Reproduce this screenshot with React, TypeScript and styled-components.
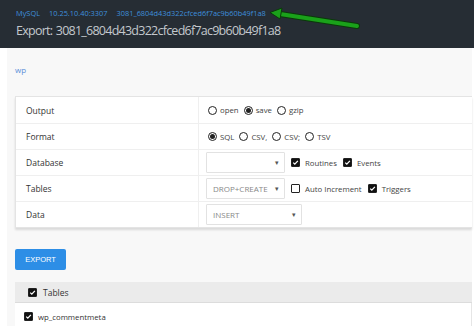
import React from 'react';
import styled, { createGlobalStyle } from 'styled-components';

const GlobalStyle = createGlobalStyle`
  html, body { margin: 0; padding: 0; background: #fff; }
  body { font-family: "Open Sans", "Noto Sans", sans-serif; color: #333; }
  * { box-sizing: border-box; }
`;

const Page = styled.div`
  width: 474px;
  height: 326px;
  overflow: hidden;
  display: flex;
  flex-direction: column;
  position: relative;
`;

const Header = styled.header`
  height: 48px;
  background: #262d34;
  padding: 8px 0 0 16px;
  display: flex;
  flex-direction: column;
  gap: 4px;
`;

const Crumbs = styled.div`
  display: flex;
  gap: 9px;
  font-size: 7.4px;
  line-height: 10px;
  color: #3e8fdc;
`;

const Title = styled.h1`
  margin: 0;
  font-size: 12.5px;
  font-weight: 400;
  line-height: 17px;
  color: #c3c8cd;
  letter-spacing: -0.75px;
  word-spacing: 1px;
`;

const Body = styled.div`
  flex: 1;
  display: flex;
`;

const Content = styled.main`
  flex: 1;
  margin: 0 2px 0 7px;
  background: #f8f8f8;
  padding: 0 0 0 8px;
  display: flex;
  flex-direction: column;
`;

const DbLink = styled.a`
  font-size: 8px;
  color: #5a8fd8;
  margin-top: 17px;
  line-height: 10px;
`;

const Card = styled.div`
  margin-top: 21px;
  background: #fff;
  border: 1px solid #e4e4e4;
  border-right: none;
  box-shadow: 0 2px 2px rgba(0, 0, 0, 0.12);
`;

const Row = styled.div`
  display: grid;
  grid-template-columns: 183px 1fr;
  height: 26px;
  border-top: 1px solid #efefef;
  &:first-child { border-top: none; }
`;

const Label = styled.div`
  display: flex;
  align-items: center;
  padding-left: 10px;
  font-size: 8.5px;
  color: #333;
  border-right: 1px solid #efefef;
`;

const Value = styled.div`
  display: flex;
  align-items: center;
  padding-left: 7px;
  gap: 3px;
  font-size: 7.8px;
  color: #444;
`;

const Radio = styled.span<{ $on?: boolean }>`
  width: 9px;
  height: 9px;
  border-radius: 50%;
  border: 1px solid #222;
  display: inline-flex;
  align-items: center;
  justify-content: center;
  margin-left: 2px;
  &::after {
    content: '';
    width: 5px;
    height: 5px;
    border-radius: 50%;
    background: ${p => (p.$on ? '#222' : 'transparent')};
  }
`;

const Box = styled.span<{ $on?: boolean }>`
  width: 9px;
  height: 9px;
  border: 1px solid #222;
  border-radius: 1px;
  background: ${p => (p.$on ? '#111' : '#fff')};
  display: inline-flex;
  align-items: center;
  justify-content: center;
  margin-left: 3px;
  margin-right: 2px;
`;

const Select = styled.div<{ $w: number }>`
  width: ${p => p.$w}px;
  height: 21px;
  border: 1px solid #e2e2e2;
  border-radius: 1px;
  background: #fff;
  display: flex;
  align-items: center;
  padding: 0 5px 0 6px;
  font-size: 8px;
  color: #888;
  &::after {
    content: '▾';
    margin-left: auto;
    font-size: 7px;
    color: #555;
  }
`;

const ExportButton = styled.button`
  margin-top: 21px;
  width: 51px;
  height: 21px;
  border: none;
  border-radius: 2px;
  background: #2d8ee6;
  color: #fff;
  font-family: "Liberation Sans", Arial, sans-serif;
  font-size: 7.5px;
  padding: 0;
`;

const TablesPanel = styled.div`
  margin-top: 12px;
  flex: 1;
  display: flex;
  flex-direction: column;
`;

const PanelHead = styled.div`
  height: 21px;
  background: #ebebeb;
  border-bottom: 1px solid #dcdcdc;
  display: flex;
  align-items: center;
  padding-left: 10px;
  font-size: 8.5px;
  color: #333;
  gap: 4px;
`;

const PanelRow = styled.div`
  flex: 1;
  background: #fff;
  display: flex;
  align-items: flex-start;
  padding: 9px 0 0 6px;
  font-size: 7.8px;
  color: #333;
  gap: 3px;
  border-right: 1px solid #e6e6e6;
`;

const Arrow = styled.svg`
  position: absolute;
  left: 264px;
  top: 4px;
`;

const Check = () => (
  <svg width="7" height="7" viewBox="0 0 10 10">
    <path d="M1.8 5.2 L4 7.4 L8.4 2.6" fill="none" stroke="#fff" strokeWidth="1.8" />
  </svg>
);

const Option = ({ on, text }: { on?: boolean; text: string }) => (
  <>
    <Radio $on={on} />
    <span>{text}</span>
  </>
);

const Checkbox = ({ on, text }: { on?: boolean; text: string }) => (
  <>
    <Box $on={on}>{on && <Check />}</Box>
    <span>{text}</span>
  </>
);

const App = () => {
  return (
    <Page>
      <GlobalStyle />
      <Header>
        <Crumbs>
          <span>MySQL</span>
          <span>10.25.10.40:3307</span>
          <span>3081_6804d43d322cfced6f7ac9b60b49f1a8</span>
        </Crumbs>
        <Title>Export: 3081_6804d43d322cfced6f7ac9b60b49f1a8</Title>
      </Header>
      <Body>
        <Content>
          <DbLink>wp</DbLink>
          <Card>
            <Row>
              <Label>Output</Label>
              <Value>
                <Option text="open" />
                <Option on text="save" />
                <Option text="gzip" />
              </Value>
            </Row>
            <Row>
              <Label>Format</Label>
              <Value>
                <Option on text="SQL" />
                <Option text="CSV," />
                <Option text="CSV;" />
                <Option text="TSV" />
              </Value>
            </Row>
            <Row>
              <Label>Database</Label>
              <Value>
                <Select $w={79}></Select>
                <Checkbox on text="Routines" />
                <Checkbox on text="Events" />
              </Value>
            </Row>
            <Row>
              <Label>Tables</Label>
              <Value>
                <Select $w={79}>DROP+CREATE</Select>
                <Checkbox text="Auto Increment" />
                <Checkbox on text="Triggers" />
              </Value>
            </Row>
            <Row>
              <Label>Data</Label>
              <Value>
                <Select $w={96}>INSERT</Select>
              </Value>
            </Row>
          </Card>
          <ExportButton>EXPORT</ExportButton>
          <TablesPanel>
            <PanelHead>
              <Checkbox on text="Tables" />
            </PanelHead>
            <PanelRow>
              <Checkbox on text="wp_commentmeta" />
            </PanelRow>
          </TablesPanel>
        </Content>
      </Body>
      <Arrow width="100" height="30" viewBox="0 0 100 30">
        <path d="M93 22 L16 10" stroke="#0a3a0a" strokeWidth="6" strokeLinecap="round" />
        <path d="M93 22 L16 10" stroke="#1aa11a" strokeWidth="4" strokeLinecap="round" />
        <path d="M6 8.5 L18 4 L16 15 Z" fill="#1aa11a" stroke="#0a3a0a" strokeWidth="1" />
      </Arrow>
    </Page>
  );
};

export default App;
